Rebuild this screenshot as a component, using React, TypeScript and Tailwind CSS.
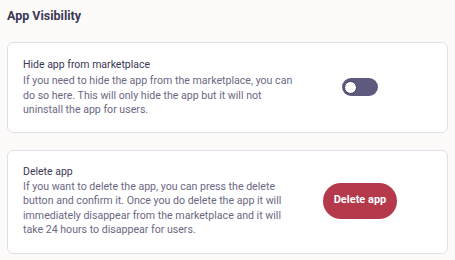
import React, { useState } from 'react';

export default function App() {
  const [hidden, setHidden] = useState(false);

  return (
    <div className="min-h-[260px] w-full bg-[#fcfbfa] px-[7px] pt-[7px] font-['Roboto',sans-serif] text-[#3b3756]">
      <h2 className="text-[12.5px] font-bold leading-[17px] text-[#3b3756]">App Visibility</h2>

      <div className="mt-[18px] flex flex-col gap-[17px]">
        {/* Hide from marketplace */}
        <div className="flex items-center rounded-[6px] border border-[#e2e0e7] bg-white py-[14px] pl-[15px]">
          <div className="w-[272px]">
            <h3 className="text-[10.5px] leading-[16px] text-[#3b3756]">Hide app from marketplace</h3>
            <p className="mt-[1px] text-[10.6px] leading-[14.5px] text-[#6b6883]">
              If you need to hide the app from the marketplace, you can do so here. This will only hide the app but it
              will not uninstall the app for users.
            </p>
          </div>
          <div className="flex flex-1 justify-center pr-[22px]">
            <button
              type="button"
              onClick={() => setHidden(!hidden)}
              className={`flex h-[18px] w-[36px] items-center rounded-full bg-[#5e5a7e] px-[2px] ${
                hidden ? 'justify-end' : 'justify-start'
              }`}
            >
              <span className="h-[13px] w-[13px] rounded-full border border-[#3f3b5c] bg-white" />
            </button>
          </div>
        </div>

        {/* Delete app */}
        <div className="flex items-center rounded-[6px] border border-[#e2e0e7] bg-white pb-[15px] pt-[13px] pl-[15px]">
          <div className="w-[272px]">
            <h3 className="text-[10.5px] leading-[16px] text-[#3b3756]">Delete app</h3>
            <p className="text-[10.6px] leading-[14.5px] text-[#6b6883]">
              If you want to delete the app, you can press the delete button and confirm it. Once you do delete the app
              it will immediately disappear from the marketplace and it will take 24 hours to disappear for users.
            </p>
          </div>
          <div className="flex flex-1 justify-center pr-[22px]">
            <button
              type="button"
              className="h-[36px] w-[74px] rounded-full bg-[#b3394b] text-[11px] font-bold text-white"
            >
              Delete app
            </button>
          </div>
        </div>
      </div>
    </div>
  );
}
